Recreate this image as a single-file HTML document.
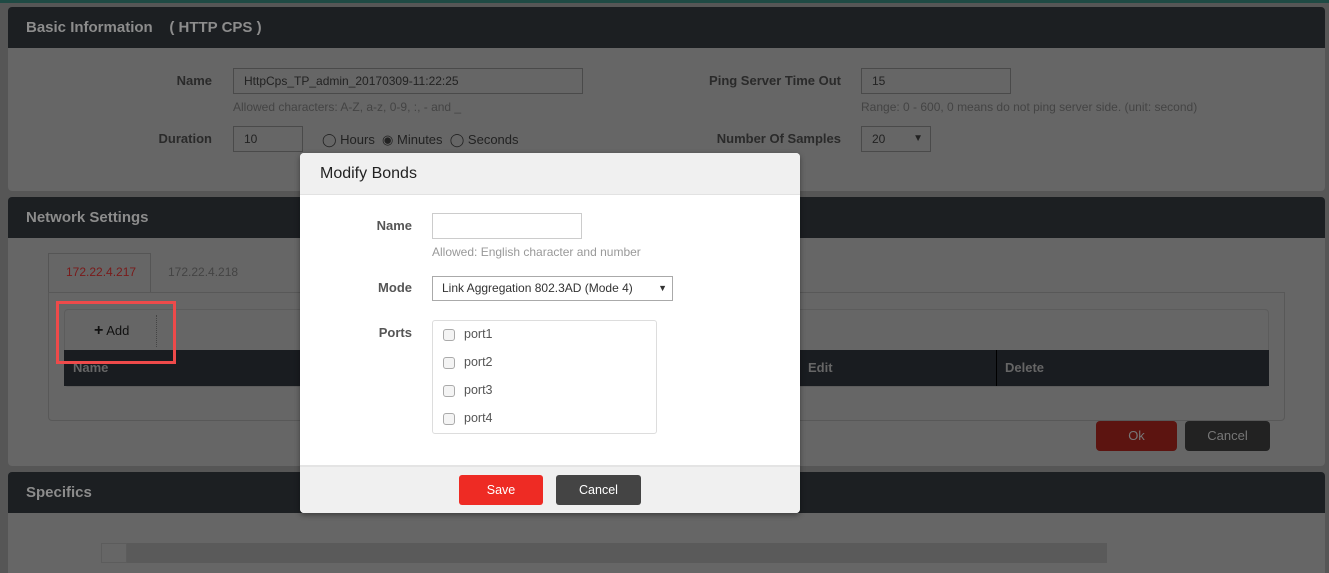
<!DOCTYPE html>
<html><head><meta charset="utf-8"><style>
*{box-sizing:border-box;margin:0;padding:0}
body{width:1329px;height:559px;overflow:hidden;background:#565656;font-family:"Liberation Sans",sans-serif;font-size:13px;position:relative;color:#333}
.a{position:absolute}
.ph{background:#1c1f22;color:#8c8c8c;font-size:15px;font-weight:bold;padding-left:18px;line-height:41px;border-radius:4px 4px 0 0}
.pb{background:#666;border-radius:0 0 4px 4px}
.lbl{font-weight:bold;color:#2a2a2a;text-align:right}
.inp{border:1px solid #4a4a4a;background:#666;color:#222;padding-left:10px;line-height:24px;font-size:12px}
.hint{color:#444;font-size:12px}
.m{color:#555}
</style></head><body>
<div class="a" style="left:0;top:0;width:1329px;height:3px;background:#1f4a44"></div>

<!-- panel 1 -->
<div class="a ph" style="left:8px;top:7px;width:1317px;height:41px">Basic Information &nbsp;&nbsp;&nbsp;( HTTP CPS )</div>
<div class="a pb" style="left:8px;top:48px;width:1317px;height:143px"></div>
<div class="a lbl" style="left:100px;top:73px;width:112px">Name</div>
<div class="a inp" style="left:233px;top:68px;width:350px;height:26px">HttpCps_TP_admin_20170309-11:22:25</div>
<div class="a hint" style="left:233px;top:100px">Allowed characters: A-Z, a-z, 0-9, :, - and _</div>
<div class="a lbl" style="left:100px;top:131px;width:112px">Duration</div>
<div class="a inp" style="left:233px;top:126px;width:70px;height:26px">10</div>
<div class="a" style="left:322px;top:132px;color:#222;font-size:13px">◯ Hours &nbsp;◉ Minutes &nbsp;◯ Seconds</div>
<div class="a lbl" style="left:660px;top:73px;width:181px">Ping Server Time Out</div>
<div class="a inp" style="left:861px;top:68px;width:150px;height:26px">15</div>
<div class="a hint" style="left:861px;top:100px">Range: 0 - 600, 0 means do not ping server side. (unit: second)</div>
<div class="a lbl" style="left:660px;top:131px;width:181px">Number Of Samples</div>
<div class="a inp" style="left:861px;top:126px;width:70px;height:26px">20 <span style="position:absolute;right:7px;font-size:10px">▼</span></div>

<!-- panel 2 -->
<div class="a ph" style="left:8px;top:197px;width:1317px;height:41px">Network Settings</div>
<div class="a pb" style="left:8px;top:238px;width:1317px;height:228px"></div>
<div class="a" style="left:48px;top:253px;width:103px;height:40px;border:1px solid #555;border-bottom:none;background:#666;color:#7a1a1a;padding:11px 0 0 17px;font-size:12px">172.22.4.217</div>
<div class="a" style="left:168px;top:265px;color:#444;font-size:12px">172.22.4.218</div>
<div class="a" style="left:48px;top:292px;width:1237px;height:129px;border:1px solid #585858;border-radius:0 0 4px 4px"></div>
<div class="a" style="left:64px;top:309px;width:1205px;height:78px;border:1px solid #5c5c5c;border-radius:4px"></div>
<div class="a" style="left:156px;top:315px;height:32px;border-left:1px dotted #444"></div>
<div class="a" style="left:94px;top:322px;color:#111;font-size:13px"><b style="font-size:16px">+</b> Add</div>
<div class="a" style="left:64px;top:350px;width:1205px;height:36px;background:#191c20;color:#666;font-weight:bold;line-height:36px">
<span class="a" style="left:9px">Name</span><span class="a" style="left:744px">Edit</span><span class="a" style="left:932px;top:0;height:36px;border-left:1px solid #000"></span><span class="a" style="left:941px">Delete</span></div>
<div class="a" style="left:56px;top:301px;width:120px;height:63px;border:3px solid #ee4a4a"></div>
<div class="a" style="left:1096px;top:421px;width:81px;height:30px;background:#5c1410;border-radius:4px;color:#777;text-align:center;line-height:30px">Ok</div>
<div class="a" style="left:1185px;top:421px;width:85px;height:30px;background:#222;border-radius:4px;color:#777;text-align:center;line-height:30px">Cancel</div>

<!-- panel 3 -->
<div class="a ph" style="left:8px;top:472px;width:1317px;height:41px">Specifics</div>
<div class="a pb" style="left:8px;top:513px;width:1317px;height:60px;border-radius:0"></div>
<div class="a" style="left:101px;top:543px;width:1006px;height:20px;background:#5a5a5a"></div>
<div class="a" style="left:101px;top:543px;width:26px;height:20px;background:#666;border:1px solid #5c5c5c"></div>

<!-- modal -->
<div class="a" style="left:300px;top:153px;width:500px;height:360px;background:#fff;border-radius:4px;box-shadow:0 2px 6px rgba(0,0,0,.4);overflow:hidden">
<div class="a" style="left:0;top:0;width:500px;height:42px;background:#f0f0f0;border-bottom:1px solid #e2e2e2;font-size:16px;color:#222;padding:12px 0 0 20px">Modify Bonds</div>
<div class="a lbl m" style="left:40px;top:65px;width:72px;color:#555">Name</div>
<div class="a" style="left:132px;top:60px;width:150px;height:26px;border:1px solid #ccc"></div>
<div class="a" style="left:132px;top:92px;color:#999;font-size:12px">Allowed: English character and number</div>
<div class="a lbl" style="left:40px;top:127px;width:72px;color:#555">Mode</div>
<div class="a" style="left:132px;top:123px;width:241px;height:25px;border:1px solid #aaa;color:#333;font-size:12px;line-height:23px;padding-left:9px">Link Aggregation 802.3AD (Mode 4)<span style="position:absolute;right:5px;font-size:9px">▼</span></div>
<div class="a lbl" style="left:40px;top:172px;width:72px;color:#555">Ports</div>
<div class="a" style="left:132px;top:167px;width:225px;height:114px;border:1px solid #ddd;border-radius:3px;color:#555;font-size:12.5px">
<div class="a" style="left:10px;top:8px;width:12px;height:12px;border:1px solid #aaa;border-radius:3px;background:#f4f4f4"></div><span class="a" style="left:31px;top:6px">port1</span>
<div class="a" style="left:10px;top:36px;width:12px;height:12px;border:1px solid #aaa;border-radius:3px;background:#f4f4f4"></div><span class="a" style="left:31px;top:34px">port2</span>
<div class="a" style="left:10px;top:64px;width:12px;height:12px;border:1px solid #aaa;border-radius:3px;background:#f4f4f4"></div><span class="a" style="left:31px;top:62px">port3</span>
<div class="a" style="left:10px;top:92px;width:12px;height:12px;border:1px solid #aaa;border-radius:3px;background:#f4f4f4"></div><span class="a" style="left:31px;top:90px">port4</span>
</div>
<div class="a" style="left:0;top:312px;width:500px;height:48px;background:#f0f0f0;border-top:2px solid #e4e4e4"></div>
<div class="a" style="left:159px;top:322px;width:84px;height:30px;background:#ee2b24;border-radius:3px;color:#fff;text-align:center;line-height:30px;font-size:12.5px">Save</div>
<div class="a" style="left:256px;top:322px;width:85px;height:30px;background:#444;border-radius:3px;color:#fff;text-align:center;line-height:30px;font-size:12.5px">Cancel</div>
</div>
</body></html>
